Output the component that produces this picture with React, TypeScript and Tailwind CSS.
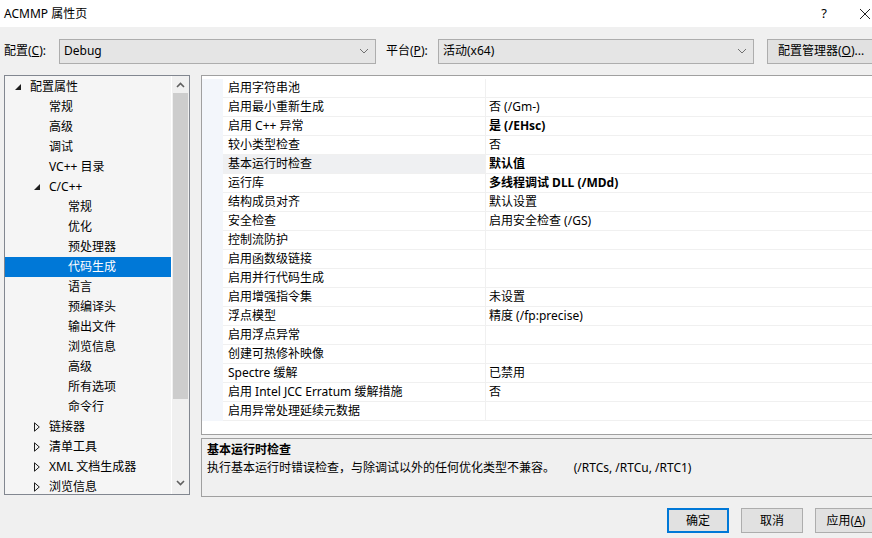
import React from 'react';

const FONT = "font-['Segoe_UI','Noto_Sans','Noto_Sans_CJK_SC',sans-serif]";

type TreeItem = { label: string; level: number; arrow?: 'open' | 'closed'; selected?: boolean };

const TREE: TreeItem[] = [
  { label: '配置属性', level: 0, arrow: 'open' },
  { label: '常规', level: 1 },
  { label: '高级', level: 1 },
  { label: '调试', level: 1 },
  { label: 'VC++ 目录', level: 1 },
  { label: 'C/C++', level: 1, arrow: 'open' },
  { label: '常规', level: 2 },
  { label: '优化', level: 2 },
  { label: '预处理器', level: 2 },
  { label: '代码生成', level: 2, selected: true },
  { label: '语言', level: 2 },
  { label: '预编译头', level: 2 },
  { label: '输出文件', level: 2 },
  { label: '浏览信息', level: 2 },
  { label: '高级', level: 2 },
  { label: '所有选项', level: 2 },
  { label: '命令行', level: 2 },
  { label: '链接器', level: 1, arrow: 'closed' },
  { label: '清单工具', level: 1, arrow: 'closed' },
  { label: 'XML 文档生成器', level: 1, arrow: 'closed' },
  { label: '浏览信息', level: 1, arrow: 'closed' },
];

type Prop = { name: string; value?: string; bold?: boolean; current?: boolean };

const PROPS: Prop[] = [
  { name: '启用字符串池' },
  { name: '启用最小重新生成', value: '否 (/Gm-)' },
  { name: '启用 C++ 异常', value: '是 (/EHsc)', bold: true },
  { name: '较小类型检查', value: '否' },
  { name: '基本运行时检查', value: '默认值', bold: true, current: true },
  { name: '运行库', value: '多线程调试 DLL (/MDd)', bold: true },
  { name: '结构成员对齐', value: '默认设置' },
  { name: '安全检查', value: '启用安全检查 (/GS)' },
  { name: '控制流防护' },
  { name: '启用函数级链接' },
  { name: '启用并行代码生成' },
  { name: '启用增强指令集', value: '未设置' },
  { name: '浮点模型', value: '精度 (/fp:precise)' },
  { name: '启用浮点异常' },
  { name: '创建可热修补映像' },
  { name: 'Spectre 缓解', value: '已禁用' },
  { name: '启用 Intel JCC Erratum 缓解措施', value: '否' },
  { name: '启用异常处理延续元数据' },
];

function Chevron({ up }: { up?: boolean }) {
  return (
    <svg width="9" height="6" viewBox="0 0 9 6">
      <path
        d={up ? 'M1 5 L4.5 1.5 L8 5' : 'M1 1 L4.5 4.5 L8 1'}
        fill="none"
        stroke="#606060"
        strokeWidth="1.6"
      />
    </svg>
  );
}

function Combo({ value, width }: { value: string; width: string }) {
  return (
    <div
      className={`${width} h-[25px] shrink-0 bg-[#e5e5e5] border border-[#adadad] flex items-center pl-[4px] pr-[6px] text-[12px] text-black`}
    >
      <span className="flex-1">{value}</span>
      <svg width="10" height="6" viewBox="0 0 10 6">
        <path d="M1 1 L5 5 L9 1" fill="none" stroke="#707070" strokeWidth="1" />
      </svg>
    </div>
  );
}

function Arrow({ kind }: { kind?: 'open' | 'closed' }) {
  if (kind === 'open')
    return (
      <svg width="6" height="6" viewBox="0 0 6 6">
        <path d="M6 0 L6 6 L0 6 Z" fill="#1e1e1e" />
      </svg>
    );
  if (kind === 'closed')
    return (
      <svg width="6" height="10" viewBox="0 0 6 10">
        <path d="M0.5 0.8 L5.3 5 L0.5 9.2 Z" fill="none" stroke="#1e1e1e" strokeWidth="1" />
      </svg>
    );
  return null;
}

function Tree() {
  return (
    <div className="w-[186px] h-[420px] shrink-0 border border-[#828790] bg-[#f5f5f5] flex overflow-hidden">
      <div className="w-[166px] flex flex-col pt-[1px] overflow-hidden">
        {TREE.map((it, i) => (
          <div
            key={i}
            className={`h-[20px] shrink-0 flex items-center text-[12px] leading-[20px] ${
              it.selected ? 'bg-[#0078d7] text-white' : 'text-black'
            }`}
            style={{ paddingLeft: 10 + it.level * 19 }}
          >
            <span className="w-[15px] flex items-center">
              <Arrow kind={it.arrow} />
            </span>
            <span className="whitespace-nowrap">{it.label}</span>
          </div>
        ))}
      </div>
      <div className="w-[1px] bg-white" />
      <div className="w-[17px] bg-[#f0f0f0] flex flex-col items-center">
        <div className="h-[17px] flex items-center justify-center">
          <Chevron up />
        </div>
        <div className="w-[15px] h-[306px] bg-[#cdcdcd]" />
        <div className="flex-1" />
        <div className="h-[17px] flex items-center justify-center mb-[3px]">
          <Chevron />
        </div>
      </div>
    </div>
  );
}

function Grid() {
  return (
    <div className="h-[360px] border-t border-l border-b border-[#a0a0a0] bg-white flex flex-col pt-[3px] overflow-hidden">
      {PROPS.map((p, i) => (
        <div key={i} className="h-[19px] shrink-0 flex text-[12px] text-black">
          <div className="w-[21px] bg-[#f3f6fb]" />
          <div
            className={`w-[262px] border-b border-[#f0f0f0] pl-[5px] flex items-center whitespace-nowrap ${
              p.current ? 'bg-[#eff0f2]' : ''
            }`}
          >
            {p.name}
          </div>
          <div
            className={`flex-1 border-b border-l border-[#f0f0f0] pl-[3px] flex items-center whitespace-nowrap ${
              p.bold ? 'font-bold' : ''
            }`}
          >
            {p.value ?? ''}
          </div>
        </div>
      ))}
    </div>
  );
}

export default function App() {
  return (
    <div className={`w-[872px] h-[538px] overflow-hidden bg-[#f0f0f0] ${FONT} text-black`}>
      {/* Title bar */}
      <div className="h-[27px] bg-white flex items-center pl-[4px] text-[12px]">
        <span className="flex-1">ACMMP 属性页</span>
        <span className="w-[20px] text-center text-[13px] mr-[25px]">?</span>
        <svg width="12" height="12" viewBox="0 0 12 12" className="mr-[1px]">
          <path d="M1 1 L11 11 M11 1 L1 11" stroke="#222" strokeWidth="1" />
        </svg>
      </div>

      {/* Toolbar */}
      <div className="h-[48px] flex items-center text-[12px] overflow-hidden">
        <span className="pl-[4px] w-[59px] shrink-0">
          配置(<u>C</u>):
        </span>
        <Combo value="Debug" width="w-[317px]" />
        <span className="pl-[10px] w-[62px] shrink-0">
          平台(<u>P</u>):
        </span>
        <Combo value="活动(x64)" width="w-[316px]" />
        <div className="ml-[13px] w-[110px] h-[25px] bg-[#e1e1e1] border border-[#adadad] flex items-center pl-[10px] shrink-0 whitespace-nowrap">
          配置管理器(<u>O</u>)...
        </div>
      </div>

      {/* Main */}
      <div className="flex pl-[4px]">
        <Tree />
        <div className="ml-[11px] flex-1 flex flex-col">
          <Grid />
          <div className="mt-[3px] h-[59px] border-t border-l border-b border-[#a0a0a0] bg-[#f0f0f0] pl-[5px] pt-[2px] text-[12px]">
            <div className="font-bold leading-[18px]">基本运行时检查</div>
            <div className="leading-[18px] whitespace-pre">
              执行基本运行时错误检查，与除调试以外的任何优化类型不兼容。      (/RTCs, /RTCu, /RTC1)
            </div>
          </div>
        </div>
      </div>

      {/* Buttons */}
      <div className="flex gap-[12px] pl-[667px] mt-[11px] text-[12px]">
        <div className="w-[62px] h-[25px] shrink-0 border-2 border-[#0078d7] bg-[#e1e1e1] flex items-center justify-center">
          确定
        </div>
        <div className="w-[62px] h-[25px] shrink-0 border border-[#adadad] bg-[#e1e1e1] flex items-center justify-center">
          取消
        </div>
        <div className="w-[62px] h-[25px] shrink-0 border border-[#adadad] bg-[#e1e1e1] flex items-center justify-center">
          应用(<u>A</u>)
        </div>
      </div>
    </div>
  );
}
